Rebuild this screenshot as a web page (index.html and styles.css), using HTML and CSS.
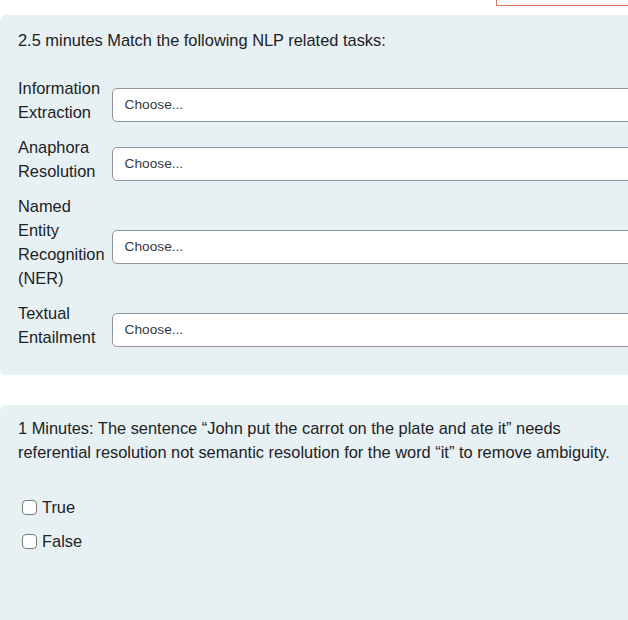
FILE: index.html
```html
<!DOCTYPE html>
<html>
<head>
<meta charset="utf-8">
<link rel="stylesheet" href="styles.css">
</head>
<body>
<div class="topbox"></div>
<div class="card card-match">
  <div class="qtext">2.5 minutes Match the following NLP related tasks:</div>
  <div class="matches">
    <div class="mlabel">Information Extraction</div>
    <div class="mcontrol"><div class="select">Choose...</div></div>
    <div class="mlabel">Anaphora Resolution</div>
    <div class="mcontrol"><div class="select">Choose...</div></div>
    <div class="mlabel">Named Entity Recognition (NER)</div>
    <div class="mcontrol"><div class="select">Choose...</div></div>
    <div class="mlabel">Textual Entailment</div>
    <div class="mcontrol"><div class="select">Choose...</div></div>
  </div>
</div>
<div class="card card-tf">
  <div class="qtext">1 Minutes: The sentence “John put the carrot on the plate and ate it” needs referential resolution not semantic resolution for the word “it” to remove ambiguity.</div>
  <div class="answers">
    <label class="option"><span class="box"></span>True</label>
    <label class="option"><span class="box"></span>False</label>
  </div>
</div>
</body>
</html>
```

FILE: styles.css
```css
html, body {
  margin: 0;
  padding: 0;
  background: #ffffff;
  overflow: hidden;
}
body {
  width: 628px;
  height: 620px;
  font-family: "Liberation Sans", Arial, Helvetica, sans-serif;
  font-size: 16.4px;
  line-height: 24px;
  color: #1d2125;
}
.topbox {
  margin-left: 496px;
  height: 5px;
  border-left: 1.5px solid #d9735f;
  border-bottom: 1.5px solid #d9735f;
}
.card {
  background: #e7f1f4;
  border-radius: 6px 0 0 6px;
  margin-right: -40px;
  padding-left: 18px;
}
.card-match {
  margin-top: 9px;
  padding-top: 13px;
  padding-bottom: 26px;
}
.card-tf {
  margin-top: 30px;
  padding-top: 11px;
  height: 300px;
}
.qtext {
  max-width: 600px;
}
.matches {
  margin-top: 24px;
  display: grid;
  grid-template-columns: min-content 1fr;
  column-gap: 7px;
  row-gap: 11px;
}
.mlabel {
  width: min-content;
}
.mcontrol {
  display: flex;
  align-items: center;
  padding-top: 9px;
}
.select {
  flex: 1;
  box-sizing: border-box;
  height: 34px;
  border: 1px solid #8f959e;
  border-radius: 5px;
  background: #ffffff;
  font-size: 13.7px;
  line-height: 32px;
  padding-left: 12px;
  color: #343a40;
}
.answers {
  margin-top: 31px;
  padding-left: 4px;
}
.option {
  display: flex;
  align-items: center;
  gap: 5px;
  height: 24px;
  margin-bottom: 10px;
}
.box {
  width: 15px;
  height: 15px;
  box-sizing: border-box;
  border: 1.5px solid #7a7a7a;
  border-radius: 4px;
  background: #ffffff;
}
```
